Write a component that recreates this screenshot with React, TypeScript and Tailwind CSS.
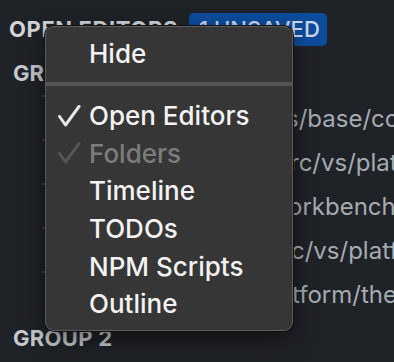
import React from 'react'

const rows = [
  { text: 's/base/common/lifecycle.ts', left: 286 },
  { text: 'rc/vs/platform/actions', left: 290 },
  { text: 'orkbench/browser/parts', left: 288 },
  { text: 'c/vs/platform/theme', left: 291 },
  { text: 'tform/theme/common', left: 292 },
]

const items = [
  { label: 'Open Editors', checked: true },
  { label: 'Folders', checked: true, disabled: true },
  { label: 'Timeline' },
  { label: 'TODOs' },
  { label: 'NPM Scripts' },
  { label: 'Outline' },
]

function Check({ color }: { color: string }) {
  return (
    <svg width="23" height="22" viewBox="0 0 23 22" fill="none">
      <path d="M1.5 11.5 L7.5 20 L21 1.5" stroke={color} strokeWidth="3" strokeLinecap="round" strokeLinejoin="round" />
    </svg>
  )
}

export default function App() {
  return (
    <div
      className="relative w-[394px] h-[362px] overflow-hidden bg-[#1f2227]"
      style={{ fontFamily: 'Inter, "Noto Sans", sans-serif' }}
    >
      {/* explorer behind the menu */}
      <div className="flex flex-col">
        <div className="flex items-center h-[57px] pl-[9px] pt-[1px]">
          <span className="text-[22px] font-bold tracking-[0.6px] text-[#d2d5da]">OPEN EDITORS</span>
          <span className="ml-[11px] h-[33px] w-[138px] rounded-[5px] bg-[#0d4c9c] flex items-center pl-[10px] text-[22px] font-medium text-[#cbd7ec]">
            1 UNSAVED
          </span>
        </div>
        <div className="h-[32px] pl-[13px] flex items-center text-[22px] font-bold text-[#c6c9ce]">GROUP 1</div>
        <div className="flex flex-col pt-[2px]">
          {rows.map((r) => (
            <div key={r.text} className="relative h-[44px]">
              <span className="absolute left-[43px] top-[4px] w-[2px] h-[2px] rounded-full bg-[#3b8ed8]" />
              <span
                className="absolute top-[10px] whitespace-nowrap text-[24px] text-[#a6abb2]"
                style={{ left: r.left }}
              >
                {r.text}
              </span>
            </div>
          ))}
        </div>
        <div className="pl-[13px] pt-[11px] text-[22px] font-bold tracking-[0.3px] text-[#c6c9ce]">GROUP 2</div>
      </div>

      {/* context menu */}
      <div className="absolute left-[45px] top-[26px] w-[248px] h-[305px] rounded-[9px] bg-[#363636] border border-[#5c5c5c] shadow-[0_0_0_1px_#111,0_8px_24px_rgba(0,0,0,0.5)] pt-[7px]">
        <div className="h-[38px] flex items-center pl-[43px] text-[26px] font-medium text-[#f2f2f2]">Hide</div>
        <div className="mt-[10px] mb-[11px] h-[4px] bg-[#555555]" />
        {items.map((it) => (
          <div key={it.label} className="h-[37.6px] flex items-center text-[26px] font-medium">
            <span className="w-[43px] pl-[12px] flex items-center">
              {it.checked && <Check color={it.disabled ? '#555555' : '#e6e6e6'} />}
            </span>
            <span className={it.disabled ? 'text-[#7c7c7c]' : 'text-[#f2f2f2]'}>{it.label}</span>
          </div>
        ))}
      </div>
    </div>
  )
}
